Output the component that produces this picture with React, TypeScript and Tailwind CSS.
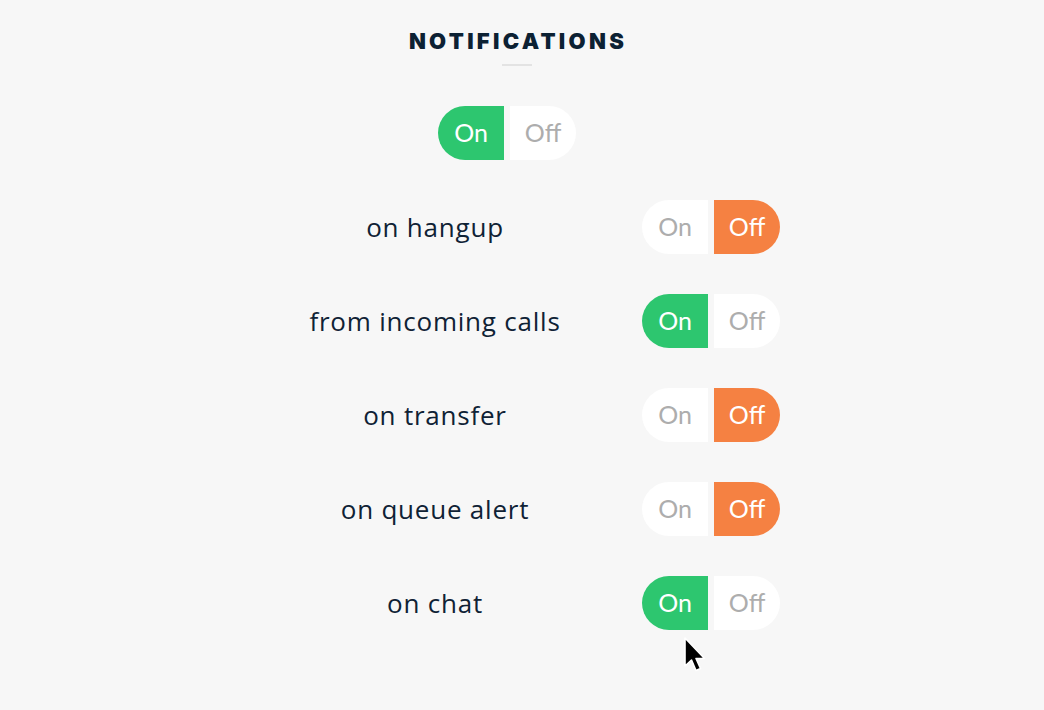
import React from "react";

type Side = "on" | "off";

function Toggle({ value }: { value: Side }) {
  const on = value === "on";
  return (
    <div className="flex h-[54px] w-[138px] shrink-0">
      <div
        className={
          "flex h-full w-[66px] items-center justify-center rounded-l-[27px] text-[25px] " +
          (on ? "bg-[#2dc66f] text-white" : "bg-white text-[#adadad]")
        }
      >
        On
      </div>
      <div className="w-[6px]" />
      <div
        className={
          "flex h-full w-[66px] items-center justify-center rounded-r-[27px] text-[25px] " +
          (!on ? "bg-[#f58142] text-white" : "bg-white text-[#adadad]")
        }
      >
        Off
      </div>
    </div>
  );
}

const rows: { label: string; value: Side }[] = [
  { label: "on hangup", value: "off" },
  { label: "from incoming calls", value: "on" },
  { label: "on transfer", value: "off" },
  { label: "on queue alert", value: "off" },
  { label: "on chat", value: "on" },
];

export default function App() {
  return (
    <div
      className="relative h-[710px] w-[1044px] overflow-hidden bg-[#f7f7f7] text-[#0f2235]"
      style={{ fontFamily: "Lato, 'Open Sans', sans-serif" }}
    >
      <div className="flex flex-col items-center pt-[28px]">
        <h1
          className="ml-[-8px] text-[22px] font-black uppercase leading-[26px] tracking-[0.15em] text-[#0c2133]"
          style={{ fontFamily: "Inter, sans-serif" }}
        >
          Notifications
        </h1>
        <div className="mt-[10px] ml-[-10px] h-[2px] w-[30px] bg-[#e3e3e3]" />
        <div className="mt-[40px] ml-[-30px]">
          <Toggle value="on" />
        </div>
      </div>
      <div className="mt-[40px] flex flex-col gap-[40px] pl-[290px]">
        {rows.map((r) => (
          <div key={r.label} className="flex items-center">
            <div
              className="w-[290px] text-center text-[26px] font-normal tracking-[0.03em]"
              style={{ fontFamily: "'Open Sans', sans-serif" }}
            >
              {r.label}
            </div>
            <div className="ml-[62px]">
              <Toggle value={r.value} />
            </div>
          </div>
        ))}
      </div>
      <svg
        className="absolute left-[683px] top-[636px]"
        width="26"
        height="40"
        viewBox="0 0 26 40"
      >
        <path
          d="M2 2 L2 30 L8.5 24 L13 34.5 L17.5 32.5 L13 22.5 L21.5 22.5 Z"
          fill="#000"
          stroke="#fff"
          strokeWidth="1.6"
          strokeLinejoin="round"
        />
      </svg>
    </div>
  );
}
